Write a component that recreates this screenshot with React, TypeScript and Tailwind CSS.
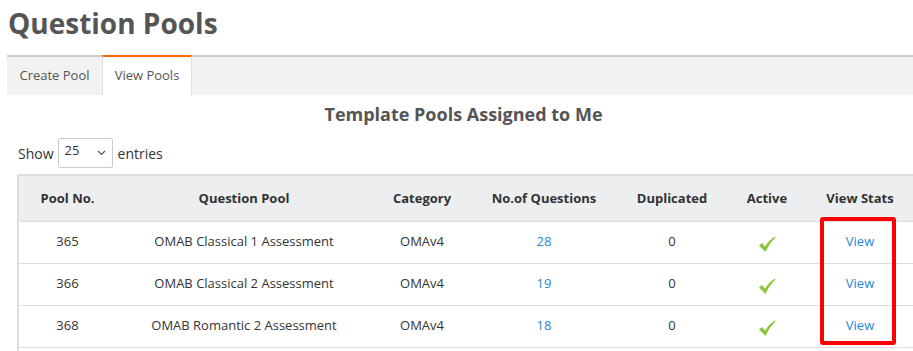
import React from 'react';

const rows = [
  { no: 365, name: 'OMAB Classical 1 Assessment', cat: 'OMAv4', count: 28, dup: 0 },
  { no: 366, name: 'OMAB Classical 2 Assessment', cat: 'OMAv4', count: 19, dup: 0 },
  { no: 368, name: 'OMAB Romantic 2 Assessment', cat: 'OMAv4', count: 18, dup: 0 },
];

const cols = [
  { label: 'Pool No.', w: 'w-[98px]' },
  { label: 'Question Pool', w: 'w-[256px]' },
  { label: 'Category', w: 'w-[100px]' },
  { label: 'No.of Questions', w: 'w-[144px]' },
  { label: 'Duplicated', w: 'w-[112px]' },
  { label: 'Active', w: 'w-[78px]' },
  { label: 'View Stats', w: 'w-[108px]' },
];

function Check() {
  return (
    <svg width="18" height="17" viewBox="0 0 18 17" className="inline-block">
      <path d="M1 9.5 L4 7 L7 10.5 Q11 4 17 0.5 L17.5 1.5 Q12 6.5 7.5 16 Z" fill="#8cc63f" />
    </svg>
  );
}

export default function App() {
  return (
    <div className="w-[913px] h-[351px] overflow-hidden bg-white text-[#333] font-['Open_Sans',sans-serif]">
      <h1 className="pl-2 pt-[4px] h-[55px] text-[28px] leading-[38px] font-bold text-[#555]">Question Pools</h1>

      <div className="ml-[7px] border-t-2 border-[#cccccc] bg-[#f2f2f2] h-[40px] flex text-[13px] text-[#555]">
        <div className="w-[95px] flex items-center justify-center">Create Pool</div>
        <div className="relative -mt-[2px] w-[90px] bg-white border-t-2 border-[#ff6a00] border-x border-x-[#dddddd] flex items-center justify-center">
          View Pools
        </div>
      </div>

      <h2 className="pl-[14px] text-center text-[18px] font-bold text-[#555] leading-[24px] mt-[7px]">Template Pools Assigned to Me</h2>

      <div className="flex items-center ml-[18px] mt-[12px] text-[14px] text-[#333]">
        <span>Show</span>
        <div className="ml-[4px] mr-[5px] w-[55px] h-[30px] border border-[#cccccc] rounded-[2px] flex items-center justify-between pl-[6px] pr-[6px]">
          <span className="text-[13px] -mt-[4px]">25</span>
          <svg width="9" height="6" viewBox="0 0 9 6">
            <path d="M1 1 L4.5 4.5 L8 1" stroke="#555" strokeWidth="1.2" fill="none" />
          </svg>
        </div>
        <span>entries</span>
      </div>

      <div className="relative ml-[17px] mt-[6px]">
        <table className="border-collapse table-fixed w-[896px] text-[13px]">
          <thead>
            <tr className="bg-[#eceef0] h-[46px]">
              {cols.map((c) => (
                <th key={c.label} className={`${c.w} font-bold text-[#333] text-center border-t-2 border-b border-[#dddddd] first:border-l-2`}>
                  {c.label}
                </th>
              ))}
            </tr>
          </thead>
          <tbody>
            {rows.map((r) => (
              <tr key={r.no} className="h-[42px] border-b border-[#dddddd]">
                <td className="text-center border-l-2 border-[#dddddd]">{r.no}</td>
                <td className="text-center">{r.name}</td>
                <td className="text-center">{r.cat}</td>
                <td className="text-center text-[#1e88d6]">{r.count}</td>
                <td className="text-center">{r.dup}</td>
                <td className="text-center pt-[4px]"><Check /></td>
                <td className="text-center text-[#1e88d6]">View</td>
              </tr>
            ))}
            <tr className="h-[20px]">
              <td className="border-l-2 border-[#dddddd]" />
              <td colSpan={6} />
            </tr>
          </tbody>
        </table>
        <div className="absolute left-[803px] top-[43px] w-[76px] h-[128px] border-[4px] border-[#ff0000] rounded-[3px]" />
      </div>
    </div>
  );
}
